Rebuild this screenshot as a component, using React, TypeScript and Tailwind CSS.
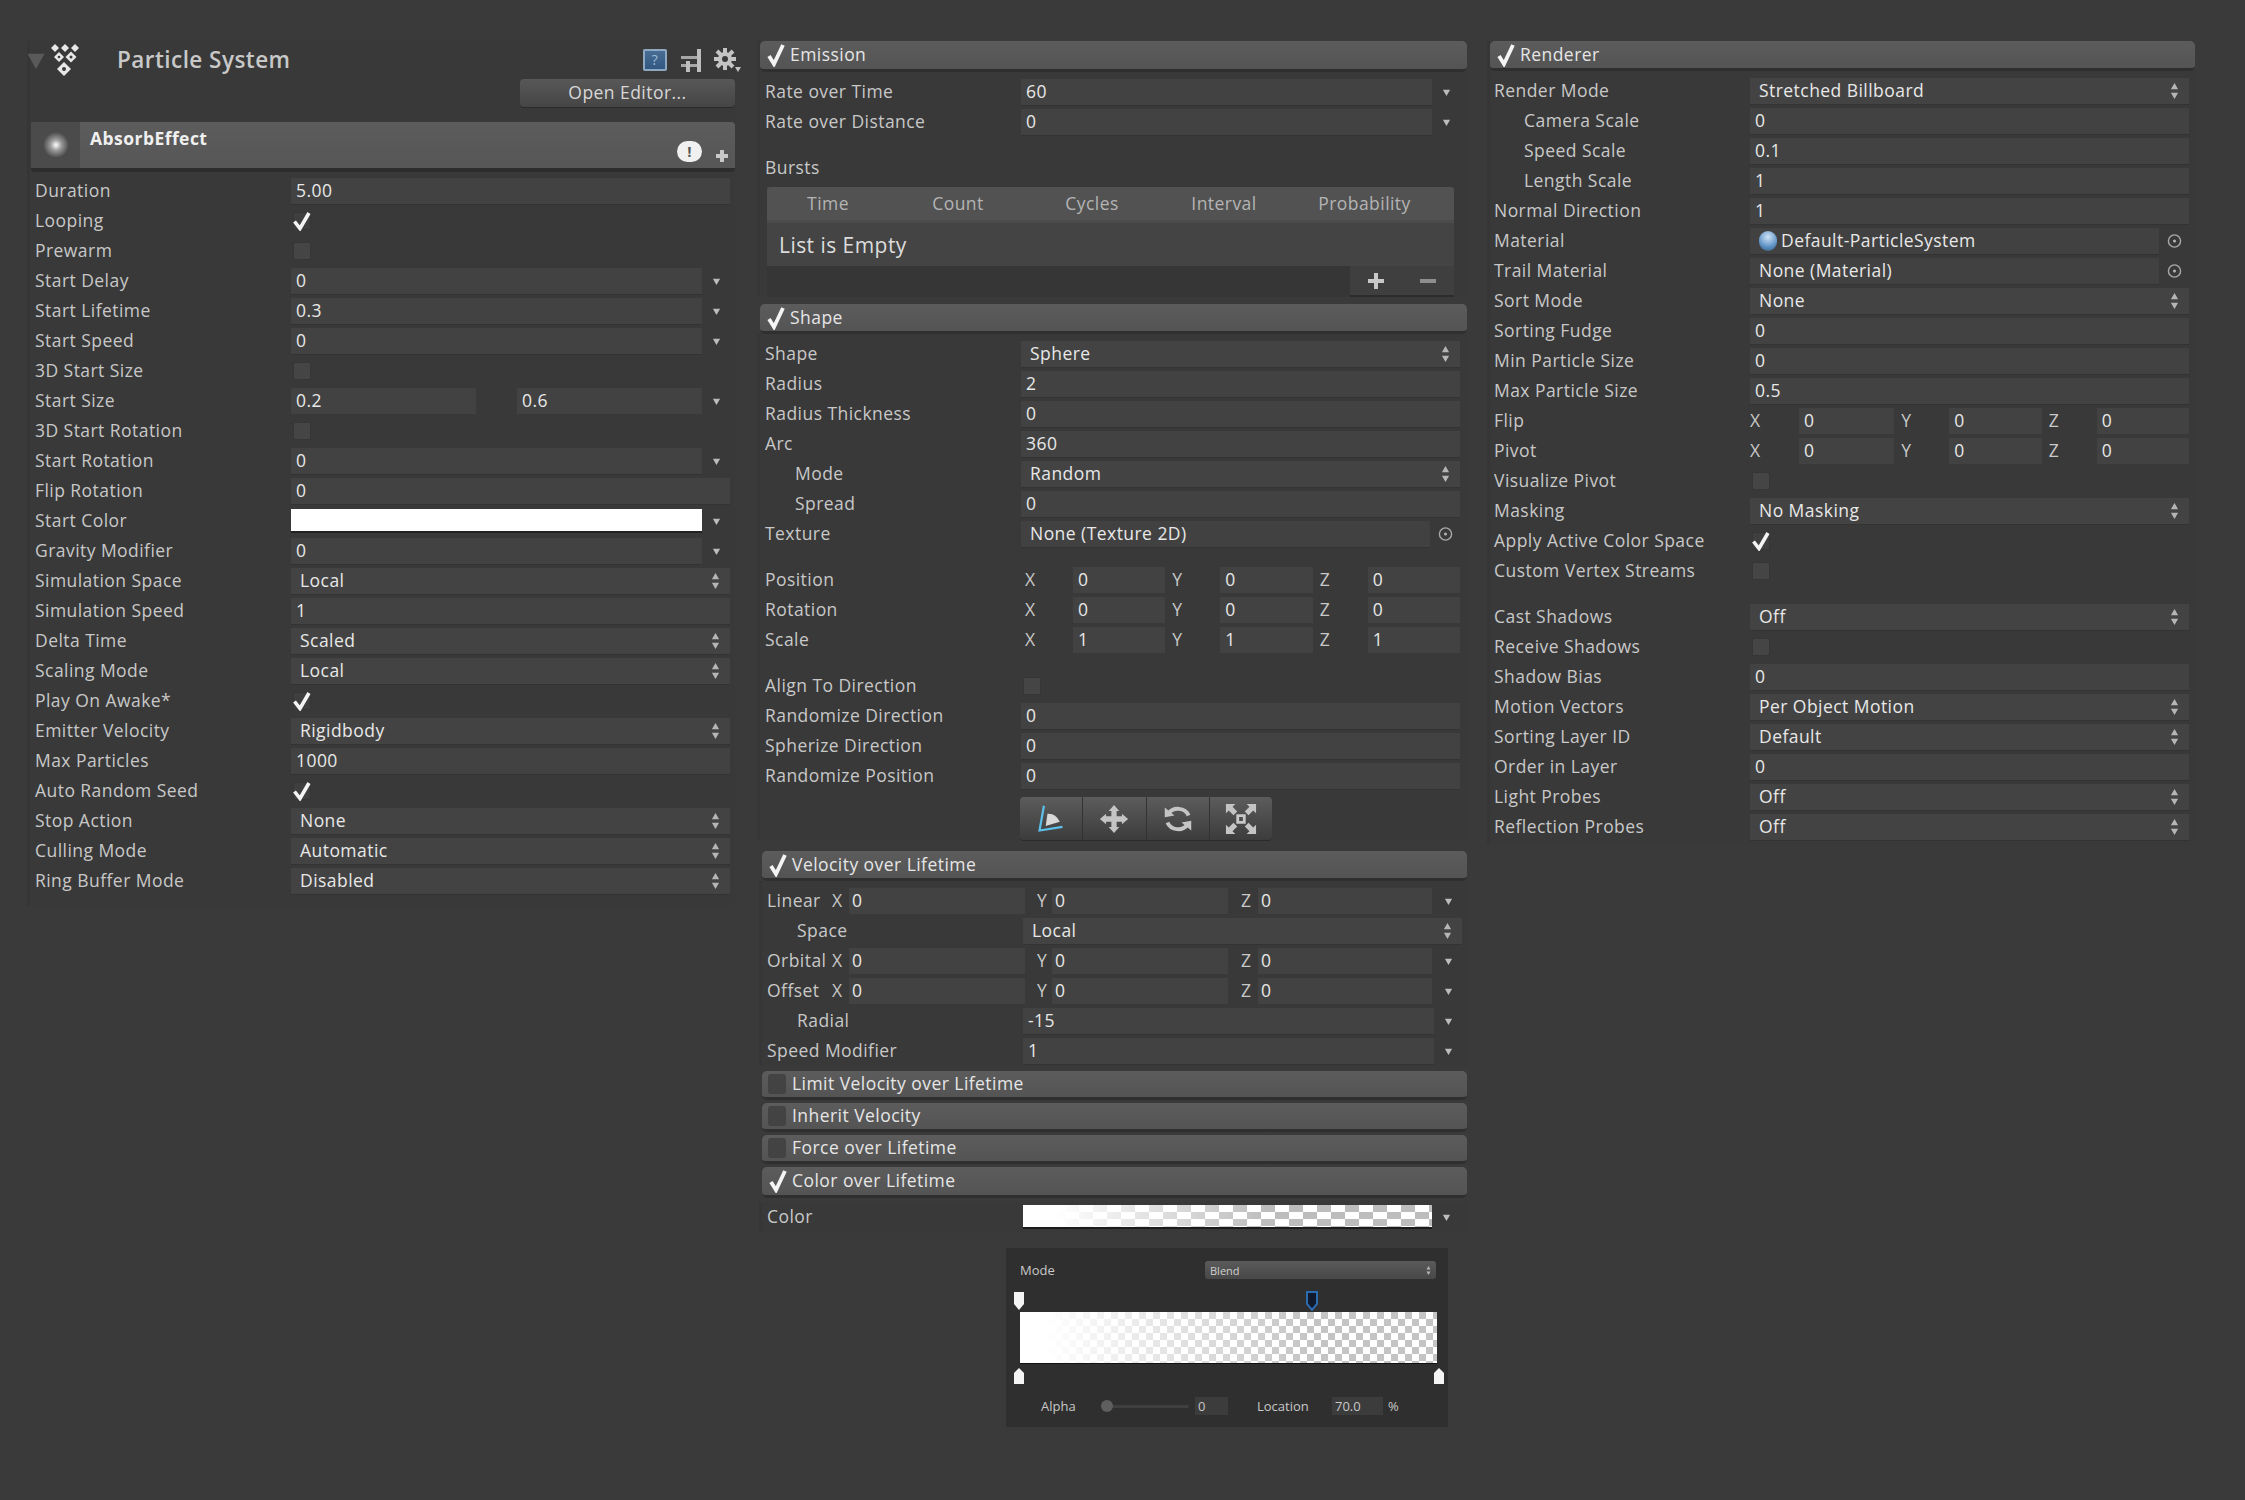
import type { ReactNode } from "react";

const CheckMark = ({ small }: { small?: boolean }) =>
  small ? (
    <svg viewBox="0 0 20 20" className="h-[20px] w-[20px]">
      <path d="M2.5 10.5 L8 17.5 L17 2" fill="none" stroke="#f4f4f4" strokeWidth="3.6" />
    </svg>
  ) : (
    <svg viewBox="0 0 20 24" className="h-[24px] w-[20px]">
      <path d="M3 13 L8 21 L17 2" fill="none" stroke="#f4f4f4" strokeWidth="3.8" />
    </svg>
  );

const Updown = () => (
  <svg viewBox="0 0 10 20" className="h-[18px] w-[9px]">
    <path d="M5 1 L9 8 H1 Z M5 19 L9 12 H1 Z" fill="#b5b5b5" />
  </svg>
);

const Arrow = () => (
  <svg viewBox="0 0 10 10" className="h-[9px] w-[9px]">
    <path d="M1 2 H9 L5 9 Z" fill="#bdbdbd" />
  </svg>
);

const Picker = () => (
  <svg viewBox="0 0 16 16" className="h-[16px] w-[15px]">
    <circle cx="8" cy="8" r="6.5" fill="none" stroke="#a8a8a8" strokeWidth="1.5" />
    <circle cx="8" cy="8" r="1.6" fill="#b5b5b5" />
  </svg>
);

function Row({ label, indent, children, pl }: { label: string; indent?: boolean; children?: ReactNode; pl?: string }) {
  return (
    <div className={`flex h-[30px] items-center ${pl ?? "pl-[5px]"}`}>
      <div className={`mt-[-2px] w-[256px] shrink-0 whitespace-nowrap leading-[24px] text-[#c8c8c8] ${indent ? "pl-[30px]" : ""}`}>{label}</div>
      {children}
    </div>
  );
}

// plain value box, reaches the right edge of the panel
function Field({ value }: { value: string }) {
  return (
    <div className="flex h-[26px] w-[439px] items-center bg-[#424242] pl-[5px] text-[#e8e8e8] shadow-[0_1px_0_#333]">{value}</div>
  );
}

// value box with the small curve arrow after it
function ArrowField({ value }: { value: string }) {
  return (
    <div className="flex w-[439px] items-center">
      <div className="flex h-[26px] w-[411px] items-center bg-[#424242] pl-[5px] text-[#e8e8e8] shadow-[0_1px_0_#333]">{value}</div>
      <div className="ml-[10px]">
        <Arrow />
      </div>
    </div>
  );
}

function Popup({ value }: { value: string }) {
  return (
    <div className="flex h-[26px] w-[439px] items-center justify-between bg-[#434343] pl-[9px] pr-[10px] text-[#e8e8e8] shadow-[0_1px_0_#333]">
      {value}
      <Updown />
    </div>
  );
}

function ObjectField({ value, sphere }: { value: string; sphere?: boolean }) {
  return (
    <div className="flex w-[439px] items-center">
      <div className="flex h-[26px] w-[409px] items-center bg-[#414141] pl-[9px] text-[#e8e8e8] shadow-[0_1px_0_#333]">
        {sphere && (
          <span className="mr-[4px] h-[20px] w-[18px] rounded-full bg-[radial-gradient(circle_at_50%_30%,#cfe3f5,#5d92c4_60%,#2d5475)]" />
        )}
        {value}
      </div>
      <div className="ml-[8px] flex">
        <Picker />
      </div>
    </div>
  );
}

function Check({ on }: { on?: boolean }) {
  return (
    <div className="flex h-[26px] w-[439px] items-center pl-[2px]">
      <div className={`flex h-[18px] w-[18px] items-center justify-center rounded-[2px] border border-[#363636] ${on ? "bg-[#3f3f3f]" : "bg-[#454545]"}`}>
        {on && (
          <div className="shrink-0">
            <CheckMark small />
          </div>
        )}
      </div>
    </div>
  );
}

function Vector({ values, tight }: { values: string[]; tight?: boolean }) {
  return (
    <div className="grid w-[439px] grid-cols-3 gap-[3px]">
      {["X", "Y", "Z"].map((axis, i) => (
        <div key={axis} className="flex h-[26px] items-center">
          <div className={`text-[#c8c8c8] ${tight && i === 0 ? "w-[49px] pl-0" : "w-[52px] pl-[4px]"}`}>{axis}</div>
          <div className="flex h-[26px] flex-1 items-center bg-[#424242] pl-[5px] text-[#e8e8e8]">{values[i]}</div>
        </div>
      ))}
    </div>
  );
}

function Section({ title, on, h }: { title: string; on?: boolean; h: string }) {
  return (
    <div className={`flex ${h} items-center rounded-[5px] border-b-[3px] border-b-[#2f2f2f] bg-[linear-gradient(#5c5c5c,#545454)] pl-[6px] text-[#e6e6e6]`}>
      <div className="flex w-[24px] items-center">
        {on ? <CheckMark /> : <div className="h-[20px] w-[18px] rounded-[3px] bg-[#434343]" />}
      </div>
      {title}
    </div>
  );
}

function VelocityRow({ label }: { label: string }) {
  return (
    <div className="flex h-[30px] items-center text-[#c8c8c8]">
      <div className="w-[66px] pl-[5px]">{label}</div>
      <div className="w-[21px] pl-[4px]">X</div>
      <div className="flex h-[26px] w-[176px] items-center bg-[#424242] pl-[3px] text-[#e8e8e8]">0</div>
      <div className="w-[27px] pl-[12px]">Y</div>
      <div className="flex h-[26px] w-[176px] items-center bg-[#424242] pl-[3px] text-[#e8e8e8]">0</div>
      <div className="w-[30px] pl-[13px]">Z</div>
      <div className="flex h-[26px] w-[174px] items-center bg-[#424242] pl-[3px] text-[#e8e8e8]">0</div>
      <div className="ml-[12px]">
        <Arrow />
      </div>
    </div>
  );
}

const LogoIcon = () => (
  <svg viewBox="0 0 30 34" className="h-[34px] w-[30px]">
    <g fill="#e8e8e8">
      {[
        [4, 5, 4],
        [14, 5, 4],
        [24, 5, 4],
        [8, 14, 5],
        [20, 14, 5.5],
        [13, 26, 7],
      ].map(([x, y, r]) => (
        <path key={`${x}-${y}`} d={`M${x} ${y - r} L${x + r} ${y} L${x} ${y + r} L${x - r} ${y} Z`} />
      ))}
    </g>
    <circle cx="13" cy="26" r="2" fill="#3a3a3a" />
    <circle cx="8" cy="14" r="1.3" fill="#3a3a3a" />
    <circle cx="20" cy="14" r="1.5" fill="#3a3a3a" />
  </svg>
);

const HelpIcon = () => (
  <div className="flex h-[22px] w-[24px] items-center justify-center rounded-[2px] bg-[linear-gradient(#4b6f96,#2f5680)] text-[14px] leading-none text-[#9dbcd8] shadow-[inset_0_0_0_2px_#8ea8c2]">
    ?
  </div>
);

const PresetIcon = () => (
  <svg viewBox="0 0 23 25" className="h-[25px] w-[23px]">
    <path d="M1 8 H19 V11 H1 Z M1 16 H19 V19 H1 Z" fill="#a6a6a6" />
    <path d="M17 1 H21 V24 H17 Z M6 13 H10 V24 H6 Z" fill="#bdbdbd" />
  </svg>
);

const GearIcon = () => (
  <svg viewBox="0 0 28 26" className="h-[26px] w-[28px]">
    <g stroke="#c4c4c4" strokeWidth="4">
      <path d="M12 1 V23 M1 12 H23 M4 4 L20 20 M20 4 L4 20" />
    </g>
    <circle cx="12" cy="12" r="7" fill="#c4c4c4" />
    <circle cx="12" cy="12" r="3" fill="#3a3a3a" />
    <path d="M22 20 H28 L25 25 Z" fill="#c4c4c4" />
  </svg>
);

const ToolCone = () => (
  <svg viewBox="0 0 34 34" className="h-[34px] w-[30px]">
    <path d="M9 2 L4 30 L30 26" fill="none" stroke="#5cc0ea" strokeWidth="2.5" />
    <path d="M13 11 Q22 10 27 20 L11 25 Z" fill="#d8d8d8" />
  </svg>
);

const ToolMove = () => (
  <svg viewBox="0 0 34 34" className="h-[34px] w-[30px]">
    <path
      d="M17 1 L23 8 H20 V14 H26 V11 L33 17 L26 23 V20 H20 V26 H23 L17 33 L11 26 H14 V20 H8 V23 L1 17 L8 11 V14 H14 V8 H11 Z"
      fill="#c4c4c4"
    />
  </svg>
);

const ToolRotate = () => (
  <svg viewBox="0 0 34 34" className="h-[34px] w-[30px]">
    <path d="M29 13 A13 12 0 0 0 6 11 M5 21 A13 12 0 0 0 28 23" fill="none" stroke="#c4c4c4" strokeWidth="4.5" />
    <path d="M2 4 L13 13 L2 15 Z M32 30 L21 21 L32 19 Z" fill="#c4c4c4" />
  </svg>
);

const ToolScale = () => (
  <svg viewBox="0 0 34 34" className="h-[34px] w-[32px]">
    <path d="M12 12 H22 V22 H12 Z M15 15 V19 H19 V15 Z" fill="#c8c8c8" fillRule="evenodd" />
    <path
      d="M1 1 H11 L8 4 L13 9 L9 13 L4 8 L1 11 Z M33 1 V11 L30 8 L25 13 L21 9 L26 4 L23 1 Z M1 33 V23 L4 26 L9 21 L13 25 L8 30 L11 33 Z M33 33 H23 L26 30 L21 25 L25 21 L30 26 L33 23 Z"
      fill="#c4c4c4"
    />
  </svg>
);

const TopMark = ({ color, stroke }: { color: string; stroke?: string }) => (
  <svg viewBox="0 0 12 20" className="h-[20px] w-[12px]">
    <path d="M1 1 H11 V13 L6 19 L1 13 Z" fill={color} stroke={stroke ?? "none"} strokeWidth="2" />
  </svg>
);

const BottomMark = () => (
  <svg viewBox="0 0 12 18" className="h-[18px] w-[12px]">
    <path d="M1 17 H11 V6 L6 1 L1 6 Z" fill="#f4f4f4" />
  </svg>
);

function GradientEditor() {
  return (
    <div className="ml-[246px] mt-[16px] h-[179px] w-[442px] bg-[#2f2f2f] pl-[14px] pr-[13px] pt-[13px] text-[13px] tracking-normal text-[#c8c8c8]">
      <div className="flex h-[18px] items-center justify-between">
        <span>Mode</span>
        <div className="mr-[-1px] flex h-[18px] w-[231px] items-center justify-between rounded-[3px] bg-[linear-gradient(#5a5a5a,#484848)] px-[5px] text-[11px] text-[#d0d0d0]">
          Blend
          <svg viewBox="0 0 10 20" className="h-[11px] w-[5px]">
            <path d="M5 1 L9 8 H1 Z M5 19 L9 12 H1 Z" fill="#b5b5b5" />
          </svg>
        </div>
      </div>
      <div className="relative mt-[11px] h-[22px]">
        <div className="absolute left-[-7px] top-[1px]">
          <TopMark color="#f4f4f4" />
        </div>
        <div className="absolute left-[286px] top-[1px]">
          <TopMark color="#101a2c" stroke="#2b6cb0" />
        </div>
      </div>
      <div className="h-[52px] w-[417px] border-b border-[#111] bg-[linear-gradient(90deg,#fff_6%,rgba(255,255,255,0)_70%),repeating-conic-gradient(#c4c4c4_0_25%,#ffffff_0_50%)] bg-[size:100%_100%,14px_14px]" />
      <div className="relative h-[22px]">
        <div className="absolute left-[-7px] top-[3px]">
          <BottomMark />
        </div>
        <div className="absolute left-[413px] top-[3px]">
          <BottomMark />
        </div>
      </div>
      <div className="mt-[10px] flex h-[20px] items-center">
        <span className="ml-[21px] w-[62px]">Alpha</span>
        <div className="relative h-[3px] w-[86px] rounded bg-[#3f3f3f]">
          <div className="absolute left-[-2px] top-[-5px] h-[12px] w-[12px] rounded-full bg-[#5f5f5f]" />
        </div>
        <div className="ml-[6px] flex h-[18px] w-[33px] items-center bg-[#3c3c3c] pl-[3px]">0</div>
        <span className="ml-[29px] w-[75px]">Location</span>
        <div className="flex h-[18px] w-[51px] items-center bg-[#3c3c3c] pl-[3px]">70.0</div>
        <span className="ml-[5px]">%</span>
      </div>
    </div>
  );
}

export default function App() {
  return (
    <div className="flex h-[1500px] w-[2245px] items-start gap-[25px] overflow-hidden bg-[#3a3a3a] pl-[30px] pt-[41px] font-['Open_Sans',sans-serif] text-[17.5px] leading-none tracking-[0.45px]">
      {/* inspector column */}
      <div className="w-[705px] bg-[#393939] pb-[10px] shadow-[-3px_0_0_#363636]">
        <div className="flex h-[38px] items-center">
          <svg viewBox="0 0 10 10" className="ml-[-3px] h-[17px] w-[18px]">
            <path d="M0 1 H10 L5 10 Z" fill="#5a5a5a" />
          </svg>
          <div className="ml-[6px]">
            <LogoIcon />
          </div>
          <div className="ml-[36px] text-[22.5px] font-semibold leading-[30px] text-[#c8c8c8]">Particle System</div>
          <div className="ml-auto mr-[-6px] flex items-center">
            <HelpIcon />
            <div className="ml-[13px]">
              <PresetIcon />
            </div>
            <div className="ml-[10px]">
              <GearIcon />
            </div>
          </div>
        </div>
        <div className="flex h-[28px] justify-end">
          <div className="flex w-[215px] items-center justify-center rounded-[4px] bg-[linear-gradient(#585858,#454545)] text-[#d8d8d8] shadow-[0_1px_0_#2a2a2a]">
            Open Editor...
          </div>
        </div>
        <div className="ml-[1px] mt-[15px] flex h-[50px] rounded-[4px] border-b-[4px] border-b-[#2d2d2d] bg-[linear-gradient(#5c5c5c,#565656)]">
          <div className="flex w-[49px] items-center justify-center bg-[#4b4b4b]">
            <div className="h-[26px] w-[26px] rounded-full bg-[radial-gradient(circle,#ffffff_0%,#9a9a9a_30%,rgba(80,80,80,0)_70%)]" />
          </div>
          <div className="ml-[10px] mt-[5px] font-bold leading-[22px] text-[#f0f0f0]">AbsorbEffect</div>
          <div className="ml-auto mr-[7px] flex items-end pb-[6px]">
            <div className="mr-[2px] flex h-[21px] w-[25px] items-center justify-center rounded-full bg-[#f0f0f0] text-[15px] font-bold text-[#555]">!</div>
            <svg viewBox="0 0 12 12" className="ml-[12px] h-[12px] w-[12px]">
              <path d="M4 0 H8 V4 H12 V8 H8 V12 H4 V8 H0 V4 H4 Z" fill="#c8c8c8" />
            </svg>
          </div>
        </div>
        <div className="mt-[4px]">
          <Row label="Duration"><Field value="5.00" /></Row>
          <Row label="Looping"><Check on /></Row>
          <Row label="Prewarm"><Check /></Row>
          <Row label="Start Delay"><ArrowField value="0" /></Row>
          <Row label="Start Lifetime"><ArrowField value="0.3" /></Row>
          <Row label="Start Speed"><ArrowField value="0" /></Row>
          <Row label="3D Start Size"><Check /></Row>
          <Row label="Start Size">
            <div className="flex h-[26px] w-[185px] items-center bg-[#424242] pl-[5px] text-[#e8e8e8]">0.2</div>
            <div className="ml-[41px] flex h-[26px] w-[185px] items-center bg-[#424242] pl-[5px] text-[#e8e8e8]">0.6</div>
            <div className="ml-[10px]"><Arrow /></div>
          </Row>
          <Row label="3D Start Rotation"><Check /></Row>
          <Row label="Start Rotation"><ArrowField value="0" /></Row>
          <Row label="Flip Rotation"><Field value="0" /></Row>
          <Row label="Start Color">
            <div className="h-[24px] w-[411px] border-b-2 border-[#222] bg-white" />
            <div className="ml-[10px]"><Arrow /></div>
          </Row>
          <Row label="Gravity Modifier"><ArrowField value="0" /></Row>
          <Row label="Simulation Space"><Popup value="Local" /></Row>
          <Row label="Simulation Speed"><Field value="1" /></Row>
          <Row label="Delta Time"><Popup value="Scaled" /></Row>
          <Row label="Scaling Mode"><Popup value="Local" /></Row>
          <Row label="Play On Awake*"><Check on /></Row>
          <Row label="Emitter Velocity"><Popup value="Rigidbody" /></Row>
          <Row label="Max Particles"><Field value="1000" /></Row>
          <Row label="Auto Random Seed"><Check on /></Row>
          <Row label="Stop Action"><Popup value="None" /></Row>
          <Row label="Culling Mode"><Popup value="Automatic" /></Row>
          <Row label="Ring Buffer Mode"><Popup value="Disabled" /></Row>
        </div>
      </div>

      {/* emission, shape, velocity */}
      <div className="w-[707px]">
        <div className="bg-[#393939] shadow-[-3px_0_0_#363636]">
          <Section title="Emission" on h="h-[31px]" />
          <div className="mt-[5px]">
            <Row label="Rate over Time"><ArrowField value="60" /></Row>
            <Row label="Rate over Distance"><ArrowField value="0" /></Row>
          </div>
          <div className="flex h-[50px] items-center pb-[4px] pl-[5px] pt-[16px] text-[#c8c8c8]">Bursts</div>
          <div className="ml-[7px] w-[687px]">
            <div className="grid h-[36px] grid-cols-[122px_138px_130px_134px_147px] items-center rounded-t-[3px] border-b-[3px] border-[#4c4c4c] bg-[#525252] text-center text-[#b4b4b4]">
              <span>Time</span>
              <span>Count</span>
              <span>Cycles</span>
              <span>Interval</span>
              <span>Probability</span>
            </div>
            <div className="flex h-[43px] items-center bg-[#444444] pl-[12px] text-[21px] leading-[30px] text-[#dcdcdc]">List is Empty</div>
            <div className="flex h-[31px]">
              <div className="w-[583px] bg-[#363636]" />
              <div className="flex flex-1 items-center justify-around border-b-2 border-[#2c2c2c] bg-[#3f3f3f]">
                <svg viewBox="0 0 16 16" className="h-[16px] w-[16px]">
                  <path d="M6 0 H10 V6 H16 V10 H10 V16 H6 V10 H0 V6 H6 Z" fill="#c8c8c8" />
                </svg>
                <div className="h-[4px] w-[16px] bg-[#8e8e8e]" />
              </div>
            </div>
          </div>
        </div>
        <div className="mt-[7px]">
          <Section title="Shape" on h="h-[30px]" />
        </div>
        <div className="bg-[#393939] pt-[5px] shadow-[-3px_0_0_#363636]">
          <Row label="Shape"><Popup value="Sphere" /></Row>
          <Row label="Radius"><Field value="2" /></Row>
          <Row label="Radius Thickness"><Field value="0" /></Row>
          <Row label="Arc"><Field value="360" /></Row>
          <Row label="Mode" indent><Popup value="Random" /></Row>
          <Row label="Spread" indent><Field value="0" /></Row>
          <Row label="Texture"><ObjectField value="None (Texture 2D)" /></Row>
          <div className="mt-[16px]">
            <Row label="Position"><Vector values={["0", "0", "0"]} /></Row>
            <Row label="Rotation"><Vector values={["0", "0", "0"]} /></Row>
            <Row label="Scale"><Vector values={["1", "1", "1"]} /></Row>
          </div>
          <div className="mt-[16px]">
            <Row label="Align To Direction"><Check /></Row>
            <Row label="Randomize Direction"><Field value="0" /></Row>
            <Row label="Spherize Direction"><Field value="0" /></Row>
            <Row label="Randomize Position"><Field value="0" /></Row>
          </div>
          <div className="ml-[260px] mt-[6px] flex h-[43px] w-[252px] rounded-[4px] bg-[linear-gradient(#5c5c5c,#3c3c3c)] shadow-[0_1px_0_#2a2a2a]">
            <div className="flex flex-1 items-center justify-center border-r border-[#333]"><ToolCone /></div>
            <div className="flex flex-1 items-center justify-center border-r border-[#333]"><ToolMove /></div>
            <div className="flex flex-1 items-center justify-center border-r border-[#333]"><ToolRotate /></div>
            <div className="flex flex-1 items-center justify-center"><ToolScale /></div>
          </div>
        </div>
        <div className="ml-[2px] mt-[11px]">
          <Section title="Velocity over Lifetime" on h="h-[30px]" />
          <div className="bg-[#393939] pt-[5px] shadow-[-3px_0_0_#363636]">
            <VelocityRow label="Linear" />
            <Row label="Space" indent><Popup value="Local" /></Row>
            <VelocityRow label="Orbital" />
            <VelocityRow label="Offset" />
            <Row label="Radial" indent><ArrowField value="-15" /></Row>
            <Row label="Speed Modifier"><ArrowField value="1" /></Row>
          </div>
          <div className="mt-[5px] flex flex-col gap-[3px]">
            <Section title="Limit Velocity over Lifetime" h="h-[29px]" />
            <Section title="Inherit Velocity" h="h-[29px]" />
            <Section title="Force over Lifetime" h="h-[29px]" />
            <Section title="Color over Lifetime" on h="h-[31px]" />
          </div>
          <div className="mt-[4px] bg-[#393939] shadow-[-3px_0_0_#363636]">
            <Row label="Color">
              <div className="h-[24px] w-[409px] border-b-2 border-[#1c1c1c] bg-[linear-gradient(90deg,#fff_8%,rgba(255,255,255,0)_60%),repeating-conic-gradient(#bdbdbd_0_25%,#ffffff_0_50%)] bg-[size:100%_100%,28px_14px]" />
              <div className="ml-[10px]"><Arrow /></div>
            </Row>
          </div>
        </div>
        <GradientEditor />
      </div>

      {/* renderer */}
      <div className="ml-[-2px] w-[705px] bg-[#393939] pb-[2px] shadow-[-3px_0_0_#363636]">
        <Section title="Renderer" on h="h-[30px]" />
        <div className="mt-[5px]">
          <Row pl="pl-[4px]" label="Render Mode"><Popup value="Stretched Billboard" /></Row>
          <Row pl="pl-[4px]" label="Camera Scale" indent><Field value="0" /></Row>
          <Row pl="pl-[4px]" label="Speed Scale" indent><Field value="0.1" /></Row>
          <Row pl="pl-[4px]" label="Length Scale" indent><Field value="1" /></Row>
          <Row pl="pl-[4px]" label="Normal Direction"><Field value="1" /></Row>
          <Row pl="pl-[4px]" label="Material"><ObjectField value="Default-ParticleSystem" sphere /></Row>
          <Row pl="pl-[4px]" label="Trail Material"><ObjectField value="None (Material)" /></Row>
          <Row pl="pl-[4px]" label="Sort Mode"><Popup value="None" /></Row>
          <Row pl="pl-[4px]" label="Sorting Fudge"><Field value="0" /></Row>
          <Row pl="pl-[4px]" label="Min Particle Size"><Field value="0" /></Row>
          <Row pl="pl-[4px]" label="Max Particle Size"><Field value="0.5" /></Row>
          <Row pl="pl-[4px]" label="Flip"><Vector tight values={["0", "0", "0"]} /></Row>
          <Row pl="pl-[4px]" label="Pivot"><Vector tight values={["0", "0", "0"]} /></Row>
          <Row pl="pl-[4px]" label="Visualize Pivot"><Check /></Row>
          <Row pl="pl-[4px]" label="Masking"><Popup value="No Masking" /></Row>
          <Row pl="pl-[4px]" label="Apply Active Color Space"><Check on /></Row>
          <Row pl="pl-[4px]" label="Custom Vertex Streams"><Check /></Row>
        </div>
        <div className="mt-[16px]">
          <Row pl="pl-[4px]" label="Cast Shadows"><Popup value="Off" /></Row>
          <Row pl="pl-[4px]" label="Receive Shadows"><Check /></Row>
          <Row pl="pl-[4px]" label="Shadow Bias"><Field value="0" /></Row>
          <Row pl="pl-[4px]" label="Motion Vectors"><Popup value="Per Object Motion" /></Row>
          <Row pl="pl-[4px]" label="Sorting Layer ID"><Popup value="Default" /></Row>
          <Row pl="pl-[4px]" label="Order in Layer"><Field value="0" /></Row>
          <Row pl="pl-[4px]" label="Light Probes"><Popup value="Off" /></Row>
          <Row pl="pl-[4px]" label="Reflection Probes"><Popup value="Off" /></Row>
        </div>
      </div>
    </div>
  );
}
